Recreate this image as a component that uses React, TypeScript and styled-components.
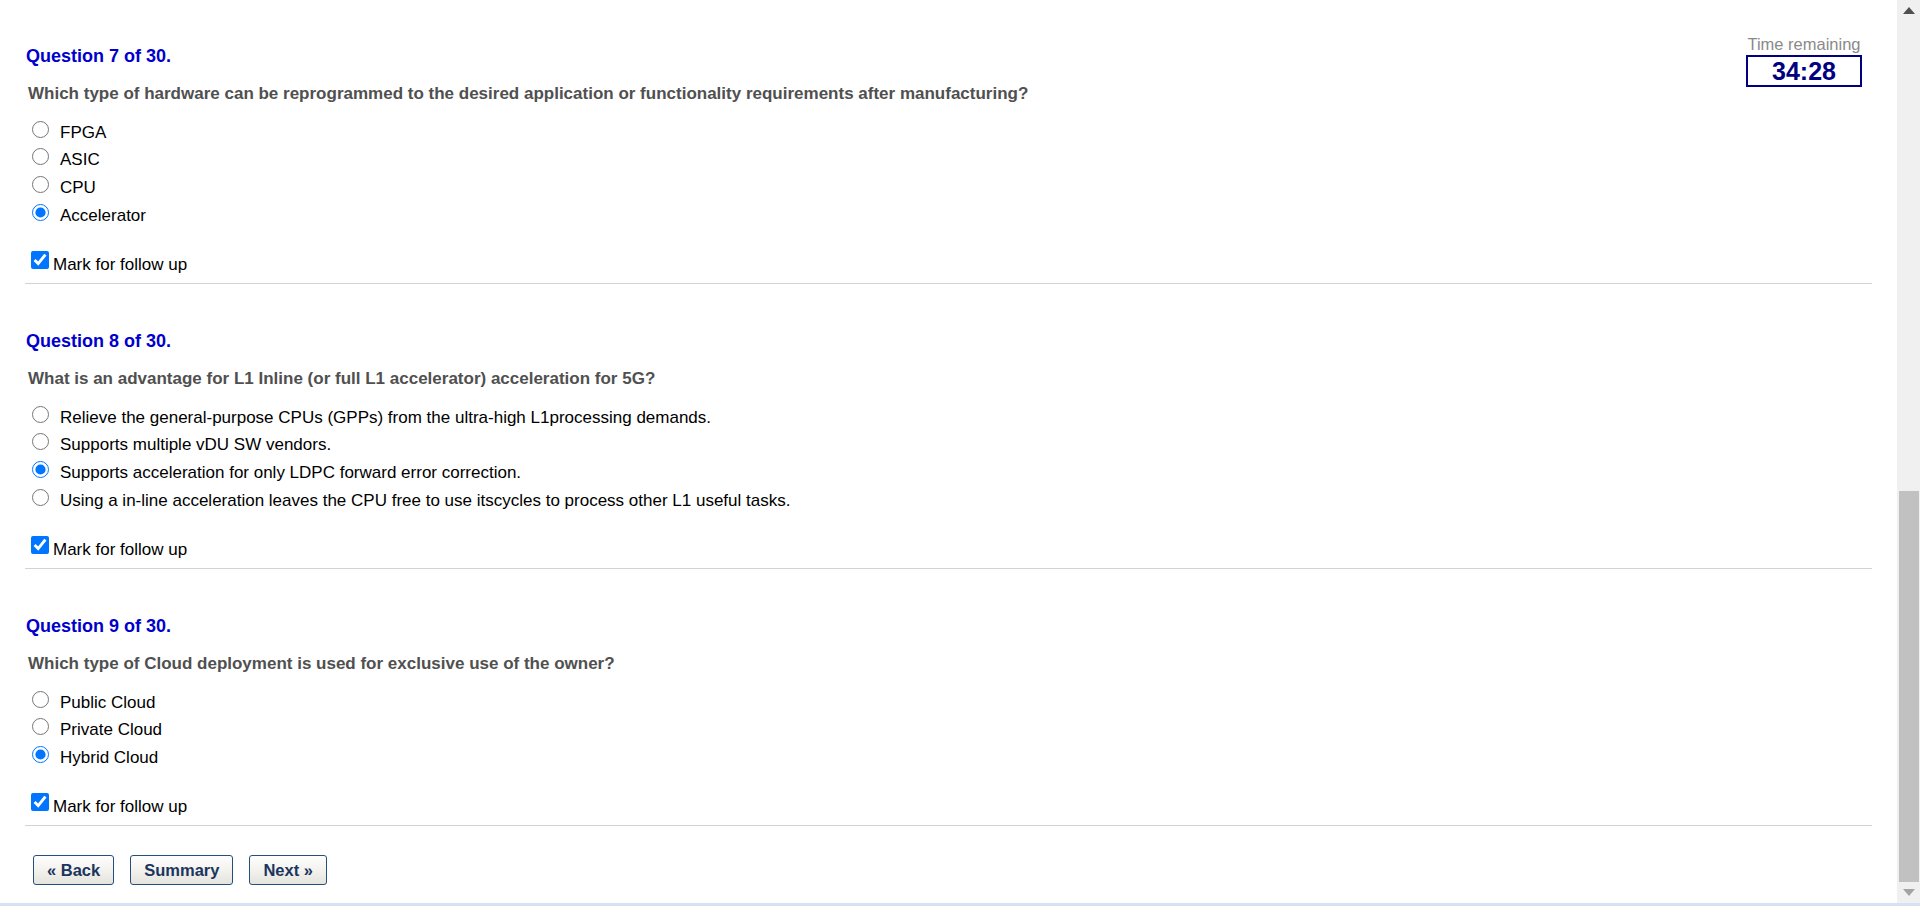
import React from "react";
import styled, { createGlobalStyle } from "styled-components";

const Global = createGlobalStyle`
  html, body { margin: 0; padding: 0; background: #fff; }
  body { font-family: "Liberation Sans", Arial, sans-serif; overflow: hidden; }
  * { box-sizing: border-box; }
`;

const Frame = styled.div`
  height: 906px;
  display: flex;
  flex-direction: column;
  overflow: hidden;
`;

const Viewport = styled.div`
  flex: 1;
  min-height: 0;
  display: flex;
`;

const Main = styled.main`
  flex: 1;
  min-width: 0;
  position: relative;
  overflow: hidden;
  padding: 0 25px;
`;

const Timer = styled.div`
  position: absolute;
  top: 34px;
  right: 35px;
  width: 116px;
  display: flex;
  flex-direction: column;
  align-items: center;
`;

const TimerLabel = styled.div`
  font-size: 16.5px;
  line-height: 20px;
  color: #8a8a8a;
  white-space: nowrap;
`;

const TimerBox = styled.div`
  margin-top: 1px;
  width: 116px;
  height: 32px;
  border: 2px solid #000080;
  color: #000080;
  font-weight: bold;
  font-size: 25px;
  line-height: 28px;
  text-align: center;
`;

const Block = styled.section`
  padding-top: 45px;
`;

const Heading = styled.h2`
  margin: 0;
  padding-left: 1px;
  font-size: 18px;
  line-height: 22px;
  font-weight: bold;
  color: #0000cd;
`;

const Prompt = styled.p`
  margin: 16px 0 0;
  padding-left: 3px;
  font-size: 17px;
  line-height: 22px;
  font-weight: bold;
  color: #505050;
`;

const Options = styled.div`
  margin-top: 13.5px;
  display: flex;
  flex-direction: column;
`;

const OptionRow = styled.label`
  display: flex;
  align-items: flex-start;
  gap: 11px;
  padding-left: 7px;
  height: 27.75px;
  font-size: 17px;
  line-height: 27.75px;
  color: #000;
`;

const Radio = styled.input.attrs({ type: "radio" })`
  width: 17px;
  height: 17px;
  margin: 2px 0 0;
  flex: none;
`;

const MarkRow = styled.label`
  margin-top: 23px;
  display: flex;
  align-items: flex-start;
  gap: 4px;
  padding-left: 6px;
  height: 24px;
  font-size: 17px;
  line-height: 24px;
  color: #000;
`;

const Check = styled.input.attrs({ type: "checkbox" })`
  width: 18px;
  height: 18px;
  margin: -2px 0 0;
  flex: none;
`;

const Divider = styled.hr`
  margin: 6.5px 0 1px;
  border: none;
  border-top: 1px solid #d3d3d3;
  height: 0;
`;

const Nav = styled.nav`
  margin-top: 29px;
  padding-left: 8px;
  display: flex;
  gap: 16px;
`;

const NavButton = styled.button`
  height: 30px;
  padding: 0 13px;
  border: 1.5px solid #24507f;
  border-radius: 3px;
  background: linear-gradient(#fefefe, #f3f2ee 50%, #e4e3dc);
  color: #1b355e;
  font-family: "Liberation Sans", Arial, sans-serif;
  font-weight: bold;
  font-size: 16.5px;
  line-height: 26px;
  cursor: pointer;
`;

const ScrollBar = styled.div`
  width: 23px;
  flex: none;
  background: #f0f0f0;
  display: flex;
  flex-direction: column;
  align-items: center;
`;

const ArrowBox = styled.div`
  height: 21px;
  width: 100%;
  flex: none;
  display: flex;
  align-items: center;
  justify-content: center;
`;

const Track = styled.div`
  flex: 1;
  width: 100%;
  display: flex;
  flex-direction: column;
  justify-content: flex-end;
  padding: 0 1px 0 2px;
`;

const Thumb = styled.div`
  height: 391px;
  background: #c1c1c1;
`;

const BottomEdge = styled.div`
  height: 3px;
  flex: none;
  background: #d6e2f4;
`;

type Q = { n: number; text: string; options: string[]; selected: number };

const questions: Q[] = [
  {
    n: 7,
    text:
      "Which type of hardware can be reprogrammed to the desired application or functionality requirements after manufacturing?",
    options: ["FPGA", "ASIC", "CPU", "Accelerator"],
    selected: 3,
  },
  {
    n: 8,
    text: "What is an advantage for L1 Inline (or full L1 accelerator) acceleration for 5G?",
    options: [
      "Relieve the general-purpose CPUs (GPPs) from the ultra-high L1processing demands.",
      "Supports multiple vDU SW vendors.",
      "Supports acceleration for only LDPC forward error correction.",
      "Using a in-line acceleration leaves the CPU free to use itscycles to process other L1 useful tasks.",
    ],
    selected: 2,
  },
  {
    n: 9,
    text: "Which type of Cloud deployment is used for exclusive use of the owner?",
    options: ["Public Cloud", "Private Cloud", "Hybrid Cloud"],
    selected: 2,
  },
];

function Question({ q }: { q: Q }) {
  return (
    <Block>
      <Heading>Question {q.n} of 30.</Heading>
      <Prompt>{q.text}</Prompt>
      <Options>
        {q.options.map((o, i) => (
          <OptionRow key={i}>
            <Radio name={`q${q.n}`} defaultChecked={i === q.selected} />
            <span>{o}</span>
          </OptionRow>
        ))}
      </Options>
      <MarkRow>
        <Check defaultChecked />
        <span>Mark for follow up</span>
      </MarkRow>
      <Divider />
    </Block>
  );
}

export default function App() {
  return (
    <>
      <Global />
      <Frame>
        <Viewport>
          <Main>
            <Timer>
              <TimerLabel>Time remaining</TimerLabel>
              <TimerBox>34:28</TimerBox>
            </Timer>
            {questions.map((q) => (
              <Question key={q.n} q={q} />
            ))}
            <Nav>
              <NavButton>« Back</NavButton>
              <NavButton>Summary</NavButton>
              <NavButton>Next »</NavButton>
            </Nav>
          </Main>
          <ScrollBar>
            <ArrowBox>
              <svg width="12" height="7" viewBox="0 0 12 7">
                <path d="M0 7 L6 0 L12 7 Z" fill="#505050" />
              </svg>
            </ArrowBox>
            <Track>
              <Thumb />
            </Track>
            <ArrowBox>
              <svg width="12" height="7" viewBox="0 0 12 7">
                <path d="M0 0 L12 0 L6 7 Z" fill="#a3a3a3" />
              </svg>
            </ArrowBox>
          </ScrollBar>
        </Viewport>
        <BottomEdge />
      </Frame>
    </>
  );
}
